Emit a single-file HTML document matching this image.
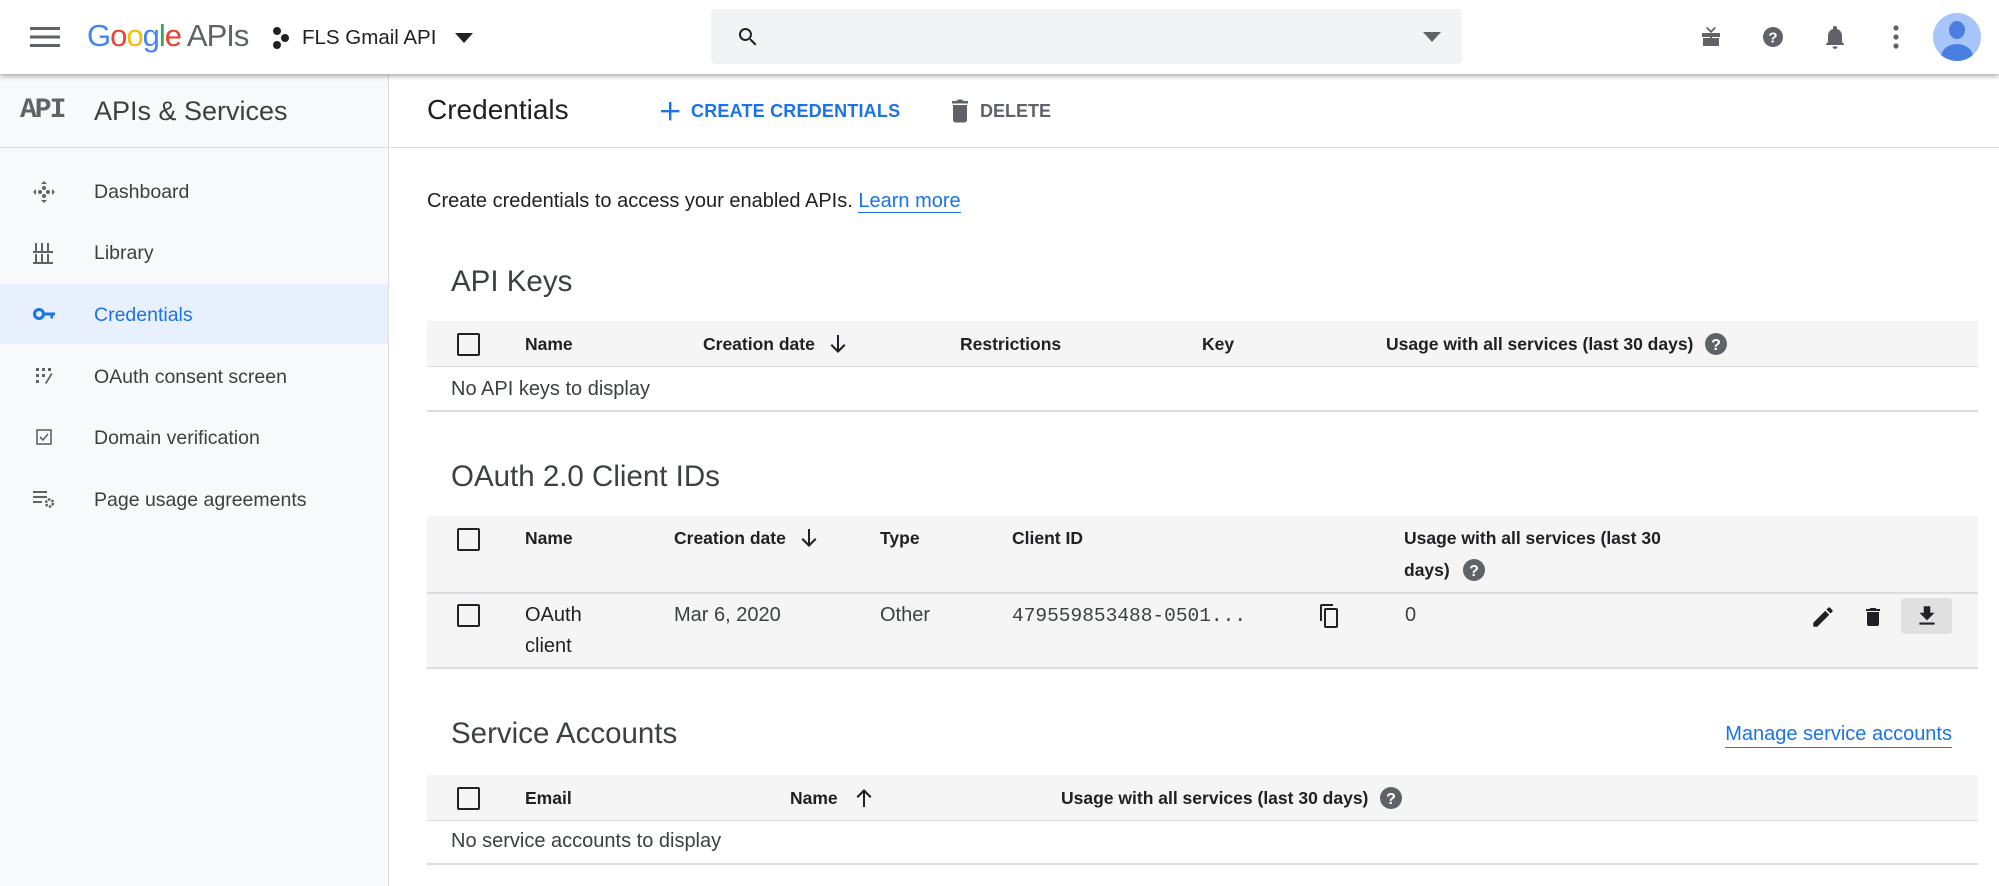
<!DOCTYPE html>
<html><head><meta charset="utf-8"><style>
*{margin:0;padding:0;box-sizing:border-box}
body{width:1999px;height:886px;overflow:hidden;background:#fff;font-family:"Liberation Sans",Arial,sans-serif;color:#202124;position:relative}
.a{position:absolute;white-space:nowrap}
.t{line-height:24px;height:24px}
.top{position:absolute;left:0;top:0;width:1999px;height:74px;background:#fff;box-shadow:0 2px 5px rgba(0,0,0,.35);z-index:5}
.side{position:absolute;left:0;top:74px;width:389px;height:812px;background:#f8f9fa;border-right:1px solid #dadce0}
.hd{font-weight:bold;font-size:17.5px;color:#202124}
.cb{position:absolute;width:23px;height:23px;border:2.5px solid #202124;border-radius:2px}
.gray{background:#f5f5f5}
.nav{font-size:19.5px;color:#3c4043}
.bt{font-size:20px}
.h2{font-size:29.5px;line-height:34px;color:#3c4043}
svg{position:absolute}
</style></head><body>
<div class="top">
 <svg style="left:30px;top:25px" width="30" height="24" viewBox="0 0 30 24"><rect y="2" width="30" height="3" fill="#5f6368"/><rect y="10.5" width="30" height="3" fill="#5f6368"/><rect y="19" width="30" height="3" fill="#5f6368"/></svg>
 <div class="a" style="left:87px;top:17px;font-size:31px;line-height:38px;letter-spacing:-1px"><span style="color:#4285f4">G</span><span style="color:#ea4335">o</span><span style="color:#fbbc05">o</span><span style="color:#4285f4">g</span><span style="color:#34a853">l</span><span style="color:#ea4335">e</span> <span style="color:#5f6368">APIs</span></div>
 <svg style="left:271px;top:26px" width="20" height="24" viewBox="0 0 20 24"><circle cx="6" cy="5" r="4" fill="#202124"/><circle cx="14" cy="12" r="4" fill="#202124"/><circle cx="6" cy="19" r="4" fill="#202124"/></svg>
 <div class="a" style="left:302px;top:25px;font-size:20.5px;line-height:26px">FLS Gmail API</div>
 <svg style="left:455px;top:33px" width="18" height="10" viewBox="0 0 18 10"><path d="M0 0h18L9 10z" fill="#202124"/></svg>
 <div class="a" style="left:711px;top:9px;width:751px;height:55px;background:#f1f3f4;border-radius:4px"></div>
 <svg style="left:736px;top:25px" width="24" height="24" viewBox="0 0 24 24"><path fill="#202124" d="M15.5 14h-.8l-.3-.3A6.5 6.5 0 1 0 9.5 16a6.5 6.5 0 0 0 4.2-1.6l.3.3v.8l5 5 1.5-1.5-5-5zm-6 0a4.5 4.5 0 1 1 0-9 4.5 4.5 0 0 1 0 9z"/></svg>
 <svg style="left:1423px;top:32px" width="18" height="10" viewBox="0 0 18 10"><path d="M0 0h18L9 10z" fill="#5f6368"/></svg>
 <svg style="left:1699px;top:25px" width="24" height="24" viewBox="0 0 24 24"><path fill="#5f6368" d="M3 8h18v4H3zM4 13h7v8H4zM13 13h7v8h-7zM11 8h2v13h-2zM7 3l5 5 5-5-1.5-1L12 5.5 8.5 2z"/></svg>
 <svg style="left:1761px;top:25px" width="24" height="24" viewBox="0 0 24 24"><circle cx="12" cy="12" r="10" fill="#5f6368"/><text x="12" y="17.5" font-size="15" font-weight="bold" fill="#fff" text-anchor="middle" font-family="Liberation Sans">?</text></svg>
 <svg style="left:1823px;top:24px" width="24" height="26" viewBox="0 0 24 26"><path fill="#5f6368" d="M12 25a2.5 2.5 0 0 0 2.5-2.5h-5A2.5 2.5 0 0 0 12 25zm7-7v-6c0-3.5-2-6.3-5-7V4a2 2 0 0 0-4 0v1c-3 .7-5 3.5-5 7v6l-2 2v1h18v-1z"/></svg>
 <svg style="left:1890px;top:24px" width="12" height="26" viewBox="0 0 12 26"><circle cx="6" cy="4" r="2.6" fill="#5f6368"/><circle cx="6" cy="13" r="2.6" fill="#5f6368"/><circle cx="6" cy="22" r="2.6" fill="#5f6368"/></svg>
 <svg style="left:1933px;top:13px" width="48" height="48" viewBox="0 0 48 48"><defs><clipPath id="c"><circle cx="24" cy="24" r="24"/></clipPath></defs><circle cx="24" cy="24" r="24" fill="#a7c5f9"/><g clip-path="url(#c)" fill="#4a7ee0"><ellipse cx="24" cy="17" rx="8" ry="9"/><ellipse cx="24" cy="44" rx="16" ry="13"/></g></svg>
</div>

<div class="side">
 <div class="a" style="left:0;top:73px;width:388px;height:1px;background:#dadce0"></div>
 <div class="a" style="left:20px;top:20px;font-family:'Liberation Mono',monospace;font-weight:bold;font-size:28px;line-height:34px;color:#5f6368;letter-spacing:-2px">API</div>
 <div class="a" style="left:94px;top:20px;font-size:27px;line-height:34px;color:#3c4043">APIs &amp; Services</div>
 <div class="a" style="left:0;top:210px;width:388px;height:60px;background:#e8f0fe"></div>
 <svg style="left:32px;top:106px" width="24" height="24" viewBox="0 0 24 24" fill="#5f6368"><path d="M12 1l3 3h-6zM12 23l-3-3h6zM1 12l3-3v6zM23 12l-3 3V9z"/><circle cx="12" cy="8" r="2"/><circle cx="12" cy="16" r="2"/><circle cx="8" cy="12" r="2"/><circle cx="16" cy="12" r="2"/></svg>
 <div class="a t nav" style="left:94px;top:106px">Dashboard</div>
 <svg style="left:33px;top:167px" width="22" height="24" viewBox="0 0 22 24" fill="#5f6368"><rect x="2" y="2" width="2" height="9"/><rect x="8" y="2" width="2" height="9"/><rect x="14" y="2" width="2" height="9"/><rect x="0" y="10" width="20" height="2"/><rect x="2" y="13" width="2" height="9"/><rect x="8" y="13" width="2" height="9"/><rect x="14" y="13" width="2" height="9"/><rect x="0" y="21" width="20" height="2"/></svg>
 <div class="a t nav" style="left:94px;top:167px">Library</div>
 <svg style="left:32px;top:230px" width="26" height="20" viewBox="0 0 26 20"><circle cx="7" cy="10" r="4.5" fill="none" stroke="#1a73e8" stroke-width="3"/><path d="M11 8.5h12v3h-2v3h-2.5v-3H11z" fill="#1a73e8"/></svg>
 <div class="a t nav" style="left:94px;top:229px;color:#1a73e8">Credentials</div>
 <svg style="left:34px;top:292px" width="20" height="20" viewBox="0 0 20 20" fill="#5f6368"><rect x="2" y="2" width="3" height="3"/><rect x="8" y="2" width="3" height="3"/><rect x="14" y="2" width="3" height="3"/><rect x="2" y="8" width="3" height="3"/><rect x="8" y="8" width="3" height="3"/><rect x="2" y="14" width="3" height="3"/><path d="M17 7l1.5 1-6 10-1.5-1z"/></svg>
 <div class="a t nav" style="left:94px;top:291px">OAuth consent screen</div>
 <svg style="left:34px;top:353px" width="20" height="20" viewBox="0 0 20 20"><rect x="3" y="3" width="14" height="14" fill="none" stroke="#5f6368" stroke-width="1.6"/><path d="M6 10l3 3 5-6" fill="none" stroke="#5f6368" stroke-width="1.6"/></svg>
 <div class="a t nav" style="left:94px;top:352px">Domain verification</div>
 <svg style="left:32px;top:414px" width="24" height="22" viewBox="0 0 24 22" fill="#5f6368"><rect x="1" y="3" width="14" height="2"/><rect x="1" y="8" width="14" height="2"/><rect x="1" y="13" width="9" height="2"/><circle cx="17.5" cy="15" r="3.5" fill="none" stroke="#5f6368" stroke-width="2.5" stroke-dasharray="2.5 1.2"/></svg>
 <div class="a t nav" style="left:94px;top:414px">Page usage agreements</div>
</div>

<div class="a" style="left:390px;top:147px;width:1609px;height:1px;background:#dadce0"></div>
<div class="a" style="left:427px;top:93px;font-size:28px;line-height:34px">Credentials</div>
<svg style="left:659px;top:100px" width="22" height="22" viewBox="0 0 22 22"><path d="M10 2h2.4v8h8v2.4h-8v8H10v-8H2V10h8z" fill="#1a73e8"/></svg>
<div class="a" style="left:691px;top:99px;font-size:18px;line-height:24px;color:#1a73e8;font-weight:bold;letter-spacing:.2px">CREATE CREDENTIALS</div>
<svg style="left:950px;top:99px" width="20" height="24" viewBox="0 0 20 24"><path fill="#5f6368" d="M3 21a2.5 2.5 0 0 0 2.5 2.5h9A2.5 2.5 0 0 0 17 21V6H3zM18 2h-4.5L12 0.5H8L6.5 2H2v2.5h16z"/></svg>
<div class="a" style="left:980px;top:99px;font-size:18px;line-height:24px;color:#5f6368;font-weight:bold">DELETE</div>

<div class="a t bt" style="left:427px;top:189px">Create credentials to access your enabled APIs. <span style="color:#1a73e8;border-bottom:1.5px solid #1a73e8">Learn more</span></div>

<div class="a h2" style="left:451px;top:265px">API Keys</div>
<div class="a gray" style="left:427px;top:321px;width:1551px;height:46px;border-bottom:1.5px solid #dadce0"></div>
<div class="cb" style="left:457px;top:333px"></div>
<div class="a t hd" style="left:525px;top:332px">Name</div>
<div class="a t hd" style="left:703px;top:332px">Creation date</div>
<svg style="left:826px;top:332px" width="24" height="24" viewBox="0 0 24 24"><path d="M11 3h2v14l5-5 1.5 1.5L12 21l-7.5-7.5L6 12l5 5z" fill="#202124"/></svg>
<div class="a t hd" style="left:960px;top:332px">Restrictions</div>
<div class="a t hd" style="left:1202px;top:332px">Key</div>
<div class="a t hd" style="left:1386px;top:332px">Usage with all services (last 30 days)</div>
<svg style="left:1704px;top:332px" width="24" height="24" viewBox="0 0 24 24"><circle cx="12" cy="12" r="11" fill="#5f6368"/><text x="12" y="18" font-size="16" font-weight="bold" fill="#fff" text-anchor="middle" font-family="Liberation Sans">?</text></svg>
<div class="a t bt" style="left:451px;top:377px;color:#3c4043">No API keys to display</div>
<div class="a" style="left:427px;top:410px;width:1551px;height:1.5px;background:#dadce0"></div>

<div class="a h2" style="left:451px;top:460px">OAuth 2.0 Client IDs</div>
<div class="a gray" style="left:427px;top:516px;width:1551px;height:152px"></div>
<div class="a" style="left:427px;top:592px;width:1551px;height:1.5px;background:#dadce0"></div>
<div class="a" style="left:427px;top:667px;width:1551px;height:1.5px;background:#dadce0"></div>
<div class="cb" style="left:457px;top:528px"></div>
<div class="a t hd" style="left:525px;top:526px">Name</div>
<div class="a t hd" style="left:674px;top:526px">Creation date</div>
<svg style="left:797px;top:526px" width="24" height="24" viewBox="0 0 24 24"><path d="M11 3h2v14l5-5 1.5 1.5L12 21l-7.5-7.5L6 12l5 5z" fill="#202124"/></svg>
<div class="a t hd" style="left:880px;top:526px">Type</div>
<div class="a t hd" style="left:1012px;top:526px">Client ID</div>
<div class="a t hd" style="left:1404px;top:526px">Usage with all services (last 30</div>
<div class="a t hd" style="left:1404px;top:558px">days)</div>
<svg style="left:1462px;top:558px" width="24" height="24" viewBox="0 0 24 24"><circle cx="12" cy="12" r="11" fill="#5f6368"/><text x="12" y="18" font-size="16" font-weight="bold" fill="#fff" text-anchor="middle" font-family="Liberation Sans">?</text></svg>
<div class="cb" style="left:457px;top:604px"></div>
<div class="a t bt" style="left:525px;top:603px">OAuth</div>
<div class="a t bt" style="left:525px;top:634px">client</div>
<div class="a t bt" style="left:674px;top:603px;color:#3c4043">Mar 6, 2020</div>
<div class="a t bt" style="left:880px;top:603px;color:#3c4043">Other</div>
<div class="a t" style="left:1012px;top:604px;font-family:'Liberation Mono',monospace;font-size:19.5px;color:#3c4043">479559853488-0501...</div>
<svg style="left:1318px;top:603px" width="24" height="26" viewBox="0 0 24 26"><path fill="#202124" d="M15 1H4a2 2 0 0 0-2 2v15h2V3h11zm3 4H8a2 2 0 0 0-2 2v16a2 2 0 0 0 2 2h10a2 2 0 0 0 2-2V7a2 2 0 0 0-2-2zm0 18H8V7h10z"/></svg>
<div class="a t bt" style="left:1405px;top:603px;color:#3c4043">0</div>
<svg style="left:1810px;top:604px" width="26" height="26" viewBox="0 0 24 24"><path fill="#202124" d="M3 17.3V21h3.7L17.8 9.9l-3.7-3.7zM20.7 7a1 1 0 0 0 0-1.4l-2.3-2.3a1 1 0 0 0-1.4 0l-1.8 1.8 3.7 3.7z"/></svg>
<svg style="left:1861px;top:604px" width="24" height="26" viewBox="0 0 24 24"><path fill="#202124" d="M6 19a2 2 0 0 0 2 2h8a2 2 0 0 0 2-2V7H6zM19 4h-3.5l-1-1h-5l-1 1H5v2h14z"/></svg>
<div class="a" style="left:1901px;top:598px;width:51px;height:36px;background:#e0e0e0;border-radius:4px"></div>
<svg style="left:1914px;top:603px" width="26" height="26" viewBox="0 0 24 24"><path fill="#202124" d="M19 9h-4V3H9v6H5l7 7zM5 18v2h14v-2z"/></svg>

<div class="a h2" style="left:451px;top:717px">Service Accounts</div>
<div class="a t bt" style="right:47px;top:722px;color:#1a73e8;border-bottom:1.5px solid #1a73e8;height:26px">Manage service accounts</div>
<div class="a gray" style="left:427px;top:775px;width:1551px;height:46px;border-bottom:1.5px solid #dadce0"></div>
<div class="cb" style="left:457px;top:787px"></div>
<div class="a t hd" style="left:525px;top:786px">Email</div>
<div class="a t hd" style="left:790px;top:786px">Name</div>
<svg style="left:852px;top:786px" width="24" height="24" viewBox="0 0 24 24"><path d="M11 21h2V7l5 5 1.5-1.5L12 3 4.5 10.5 6 12l5-5z" fill="#202124"/></svg>
<div class="a t hd" style="left:1061px;top:786px">Usage with all services (last 30 days)</div>
<svg style="left:1379px;top:786px" width="24" height="24" viewBox="0 0 24 24"><circle cx="12" cy="12" r="11" fill="#5f6368"/><text x="12" y="18" font-size="16" font-weight="bold" fill="#fff" text-anchor="middle" font-family="Liberation Sans">?</text></svg>
<div class="a t bt" style="left:451px;top:829px;color:#3c4043">No service accounts to display</div>
<div class="a" style="left:427px;top:863px;width:1551px;height:1.5px;background:#dadce0"></div>
</body></html>
